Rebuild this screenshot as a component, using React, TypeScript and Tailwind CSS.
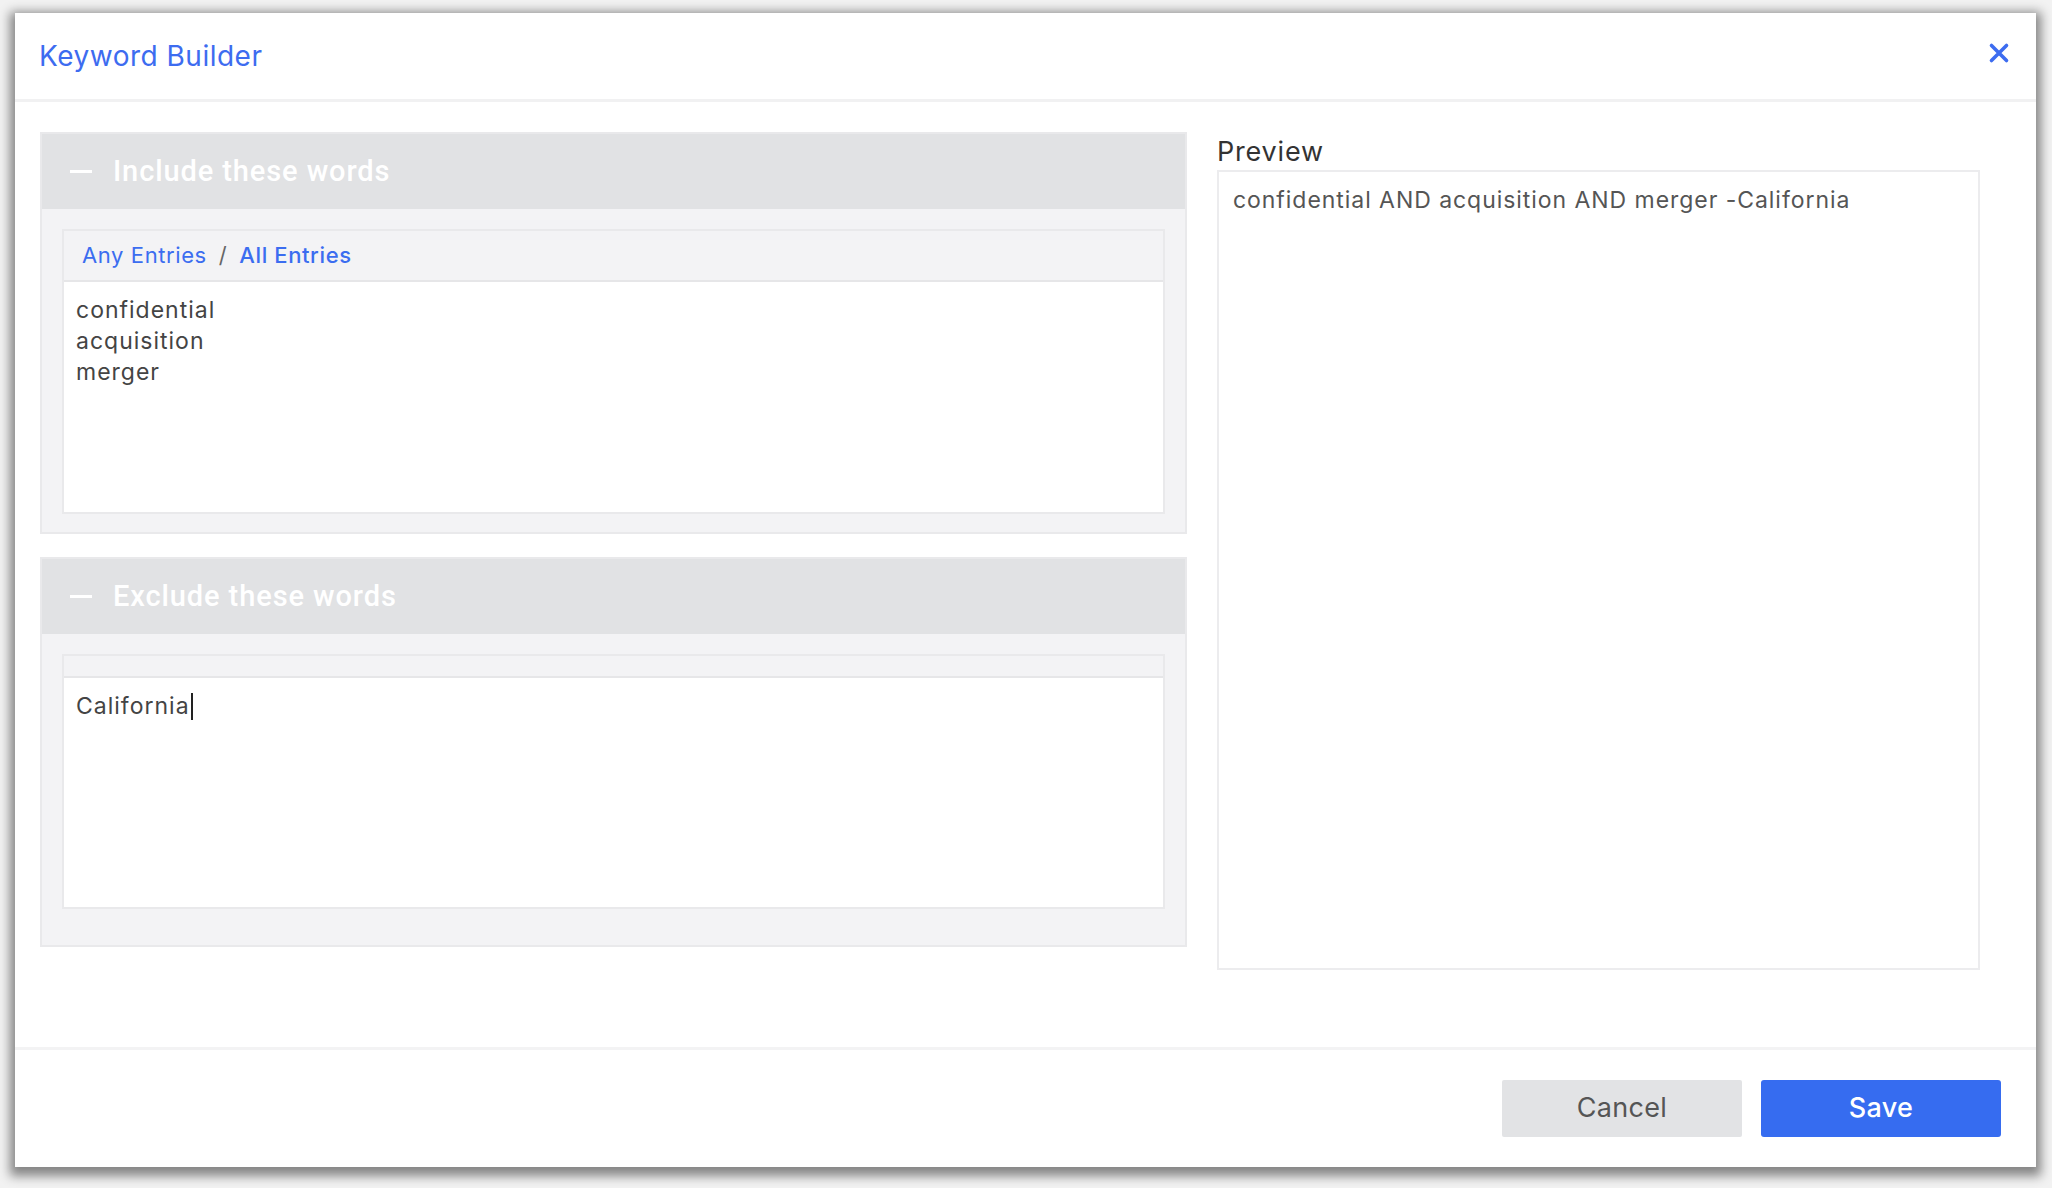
import React from "react";

function Section({ title, tabs, children, bodyH, tabH, pb }: { title: string; tabs?: boolean; children: React.ReactNode; bodyH: string; tabH: string; pb: string }) {
  return (
    <div className="flex flex-col border-2 border-[#e9e9eb] bg-[#f3f3f5]">
      <div className="flex h-[75px] items-center bg-[#e1e2e4] pl-[28px]">
        <span className="mr-[21px] block h-[3px] w-[22px] bg-white" />
        <span className="text-[29px] font-medium tracking-[0.9px] text-white" style={{ fontFamily: "Roboto, sans-serif" }}>{title}</span>
      </div>
      <div className={`px-[20px] pt-[20px] ${pb}`}>
        <div className="border-2 border-[#e9e9eb]">
          <div className={`flex items-center border-b-2 border-[#e6e6e8] bg-[#f3f3f5] pl-[18px] ${tabH}`}>
            {tabs && (
              <div className="text-[22px] tracking-[0.6px] text-[#3b6df0]">
                <span>Any Entries</span>
                <span className="mx-[12px] text-[#666]">/</span>
                <span className="font-medium">All Entries</span>
              </div>
            )}
          </div>
          <div className={`bg-white px-[12px] pt-[13px] text-[23px] leading-[31px] tracking-[1px] text-[#444] ${bodyH}`}>{children}</div>
        </div>
      </div>
    </div>
  );
}

export default function App() {
  return (
    <div className="flex h-[1188px] w-[2052px] items-start bg-[#f2f2f2] pl-[15px] pt-[13px]" style={{ fontFamily: "Inter, 'Liberation Sans', sans-serif" }}>
      <div className="flex h-[1154px] w-[2021px] flex-col bg-white shadow-[0_4px_10px_5px_rgba(0,0,0,0.45)]">
        <div className="flex h-[89px] shrink-0 items-center justify-between border-b-[3px] border-[#f1f1f2] pl-[24px] pr-[26px]">
          <span className="text-[28px] tracking-[0.5px] text-[#3d6cf0]">Keyword Builder</span>
          <svg width="22" height="22" viewBox="0 0 22 22" className="mt-[-6px]">
            <path d="M3.5 3.5 L18.5 18.5 M18.5 3.5 L3.5 18.5" stroke="#3d6cf0" strokeWidth="3.6" strokeLinecap="round" />
          </svg>
        </div>
        <div className="flex h-[945px] shrink-0 gap-[30px] pl-[25px] pt-[30px]">
          <div className="flex w-[1147px] flex-col gap-[23px]">
            <Section title="Include these words" tabs bodyH="h-[230px]" tabH="h-[51px]" pb="pb-[18px]">
              <div>confidential</div>
              <div>acquisition</div>
              <div>merger</div>
            </Section>
            <Section title="Exclude these words" bodyH="h-[229px]" tabH="h-[22px]" pb="pb-[36px]">
              <div className="flex items-center">
                <span>California</span>
                <span className="ml-[1px] inline-block h-[27px] w-[2px] bg-[#222]" />
              </div>
            </Section>
          </div>
          <div className="flex w-[763px] flex-col">
            <div className="h-[38px] pt-[3px] text-[27px] leading-[34px] tracking-[0.8px] text-[#333]">Preview</div>
            <div className="h-[800px] border-2 border-[#ececee] px-[14px] pt-[11px] text-[23px] tracking-[0.95px] text-[#555]">
              confidential AND acquisition AND merger -California
            </div>
          </div>
        </div>
        <div className="flex flex-1 items-start justify-end gap-[19px] border-t-[3px] border-[#f3f3f4] pr-[35px] pt-[30px]">
          <button className="h-[57px] w-[240px] rounded-[2px] bg-[#e2e3e5] text-[27px] tracking-[0.3px] text-[#555]">Cancel</button>
          <button className="h-[57px] w-[240px] rounded-[3px] bg-[#366cf0] text-[27px] font-medium tracking-[0.3px] text-white">Save</button>
        </div>
      </div>
    </div>
  );
}
